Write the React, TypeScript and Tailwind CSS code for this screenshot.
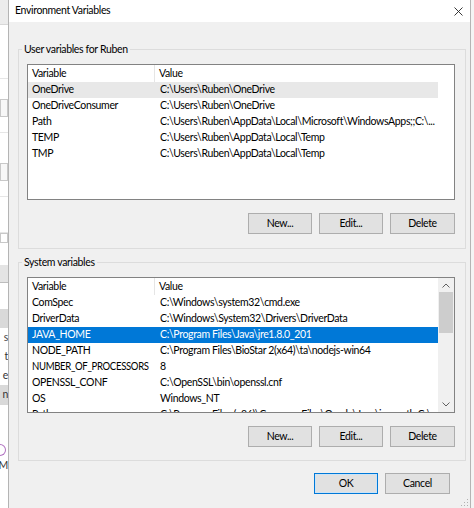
import React from "react";

type Row = { name: string; value: string; narrow?: boolean };

const userRows: Row[] = [
  { name: "OneDrive", value: "C:\\Users\\Ruben\\OneDrive" },
  { name: "OneDriveConsumer", value: "C:\\Users\\Ruben\\OneDrive" },
  { name: "Path", value: "C:\\Users\\Ruben\\AppData\\Local\\Microsoft\\WindowsApps;;C:\\..." },
  { name: "TEMP", value: "C:\\Users\\Ruben\\AppData\\Local\\Temp" },
  { name: "TMP", value: "C:\\Users\\Ruben\\AppData\\Local\\Temp" },
];

const systemRows: Row[] = [
  { name: "ComSpec", value: "C:\\Windows\\system32\\cmd.exe" },
  { name: "DriverData", value: "C:\\Windows\\System32\\Drivers\\DriverData" },
  { name: "JAVA_HOME", value: "C:\\Program Files\\Java\\jre1.8.0_201" },
  { name: "NODE_PATH", value: "C:\\Program Files\\BioStar 2(x64)\\ta\\nodejs-win64" },
  { name: "NUMBER_OF_PROCESSORS", value: "8", narrow: true },
  { name: "OPENSSL_CONF", value: "C:\\OpenSSL\\bin\\openssl.cnf" },
  { name: "OS", value: "Windows_NT" },
  { name: "Path", value: "C:\\Program Files (x86)\\Common Files\\Oracle\\Java\\javapath;C:\\..." },
];

function WinButton({ label, primary }: { label: string; primary?: boolean }) {
  return (
    <div
      className={
        "w-full h-[21px] flex items-center justify-center bg-[#e1e1e1] border text-black " +
        (primary ? "border-[#0078d7] shadow-[inset_0_0_0_1px_#cce4f7]" : "border-[#adadad]")
      }
    >
      {label}
    </div>
  );
}

function ListRow({ row, mode }: { row: Row; mode?: "active" | "inactive" }) {
  const bg =
    mode === "active" ? "bg-[#0078d7] text-white" : mode === "inactive" ? "bg-[#e8e8e8] text-black" : "text-black";
  return (
    <div className={"flex h-[16px] items-center shrink-0 whitespace-nowrap " + bg}>
      <div className="w-[127px] pl-[4px] overflow-hidden shrink-0">
        {row.narrow ? <span className="inline-block origin-left scale-x-[0.91]">{row.name}</span> : row.name}
      </div>
      <div className="flex-1 pl-[5px] overflow-hidden">{row.value}</div>
    </div>
  );
}

function ListHeader() {
  return (
    <div className="flex h-[17px] items-center shrink-0 text-black">
      <div className="w-[127px] pl-[4px] h-full flex items-center border-r border-[#e5e5e5]">Variable</div>
      <div className="flex-1 pl-[4px]">Value</div>
    </div>
  );
}

function Chevron({ up }: { up?: boolean }) {
  return (
    <svg width="8" height="5" viewBox="0 0 8 5" className="block">
      <polyline
        points={up ? "0.5,4.5 4,1 7.5,4.5" : "0.5,0.5 4,4 7.5,0.5"}
        fill="none"
        stroke="#606060"
        strokeWidth="1"
      />
    </svg>
  );
}

function Scrollbar() {
  return (
    <div className="w-[16px] shrink-0 bg-[#f0f0f0] flex flex-col">
      <div className="h-[14px] flex items-center justify-center">
        <Chevron up />
      </div>
      <div className="mx-[1px] h-[41px] bg-[#cdcdcd]" />
      <div className="flex-1" />
      <div className="h-[14px] flex items-center justify-center mb-[1px]">
        <Chevron />
      </div>
    </div>
  );
}

function VarGroup({
  title,
  rows,
  selected,
  mode,
  scroll,
  className,
}: {
  title: string;
  rows: Row[];
  selected: number;
  mode: "active" | "inactive";
  scroll?: boolean;
  className?: string;
}) {
  return (
    <fieldset className={"border border-[#dcdcdc] pl-[8px] pr-[10px] pt-[7px] " + (className ?? "")}>
      <legend className="ml-[-5px] px-[2px] h-[16px] leading-[16px] text-black">{title}</legend>
      <div className="h-[136px] border border-[#828282] bg-white flex overflow-hidden">
        <div className="w-[410px] flex flex-col overflow-hidden shrink-0">
          <ListHeader />
          {rows.map((r, i) => (
            <ListRow key={r.name + i} row={r} mode={i === selected ? mode : undefined} />
          ))}
        </div>
        <div className="flex-1" />
        {scroll && <Scrollbar />}
      </div>
      <div className="mt-[13px] flex justify-end gap-[7px]">
        <div className="w-[64px]">
          <WinButton label="New..." />
        </div>
        <div className="w-[64px]">
          <WinButton label="Edit..." />
        </div>
        <div className="w-[65px]">
          <WinButton label="Delete" />
        </div>
      </div>
    </fieldset>
  );
}

function BackgroundStrip() {
  return (
    <div className="w-[8px] shrink-0 bg-white flex flex-col overflow-hidden leading-[19px] text-[#333]">
      <div className="h-[25px] bg-[#ececec] border-b border-[#d8d8d8] shrink-0" />
      <div className="h-[54px] border-b border-[#e6e6e6] shrink-0" />
      <div className="h-[18px] mt-[20px] border border-[#c8c8c8] bg-[#f7f7f7] shrink-0" />
      <div className="h-[16px] border-b border-[#e6e6e6] shrink-0" />
      <div className="h-[18px] mt-[30px] border border-[#c8c8c8] bg-[#f7f7f7] shrink-0" />
      <div className="h-[16px] border-b border-[#e6e6e6] shrink-0" />
      <div className="h-[36px] border-b border-[#e6e6e6] shrink-0" />
      <div className="h-[10px] border border-[#c8c8c8] shrink-0" />
      <div className="h-[18px] mt-[22px] bg-[#e4e4e4] border-b border-[#bdbdbd] shrink-0" />
      <div className="h-[26px] shrink-0" />
      <div className="h-[19px] bg-[#d9d9d9] shrink-0" />
      <div className="h-[19px] shrink-0 flex justify-end overflow-hidden">
        <span className="text-[#444]">s</span>
      </div>
      <div className="h-[19px] shrink-0 flex justify-end overflow-hidden">
        <span>t</span>
      </div>
      <div className="h-[19px] shrink-0 flex justify-end overflow-hidden">
        <span>e</span>
      </div>
      <div className="h-[19px] bg-[#d9d9d9] shrink-0 flex justify-end overflow-hidden">
        <span>n</span>
      </div>
      <div className="h-[40px] border-t border-[#d8d8d8] shrink-0" />
      <div className="h-[12px] w-[6px] rounded-r-full border border-l-0 border-[#b070c0] shrink-0" />
      <div className="h-[19px] shrink-0 flex justify-end overflow-hidden">
        <span>M</span>
      </div>
    </div>
  );
}

export default function App() {
  return (
    <div className="w-[474px] h-[508px] flex overflow-hidden bg-white text-[10.5px] tracking-[-0.35px] font-['Lato','Liberation_Sans',sans-serif]">
      <BackgroundStrip />
      <div className="w-[463px] shrink-0 border-x border-[#b4b4b4] flex flex-col relative bg-[#f0f0f0]">
        <div className="h-[22px] shrink-0 bg-white flex items-center justify-between pl-[6px] pr-[7px]">
          <span className="text-black">Environment Variables</span>
          <svg width="9" height="9" viewBox="0 0 9 9" className="block">
            <path d="M0.5 0.5 L8.5 8.5 M8.5 0.5 L0.5 8.5" stroke="#222" strokeWidth="0.9" />
          </svg>
        </div>
        <VarGroup
          title="User variables for Ruben"
          rows={userRows}
          selected={0}
          mode="inactive"
          className="mt-[19px] ml-[9px] mr-[4px] pb-[14px]"
        />
        <VarGroup
          title="System variables"
          rows={systemRows}
          selected={2}
          mode="active"
          scroll
          className="mt-[5px] ml-[9px] mr-[4px] pb-[13px]"
        />
        <div className="mt-[12px] flex justify-end gap-[7px] pr-[20px]">
          <div className="w-[64px]">
            <WinButton label="OK" primary />
          </div>
          <div className="w-[65px]">
            <WinButton label="Cancel" />
          </div>
        </div>
        <svg width="8" height="8" viewBox="0 0 8 8" className="absolute right-[1px] bottom-[1px]">
          <rect x="6" y="0" width="1" height="1" fill="#b0b0b0" />
          <rect x="3" y="3" width="1" height="1" fill="#b0b0b0" />
          <rect x="6" y="3" width="1" height="1" fill="#b0b0b0" />
          <rect x="0" y="6" width="1" height="1" fill="#b0b0b0" />
          <rect x="3" y="6" width="1" height="1" fill="#b0b0b0" />
          <rect x="6" y="6" width="1" height="1" fill="#b0b0b0" />
        </svg>
      </div>
      <div className="flex-1 bg-[#f4f4f4]" />
    </div>
  );
}
